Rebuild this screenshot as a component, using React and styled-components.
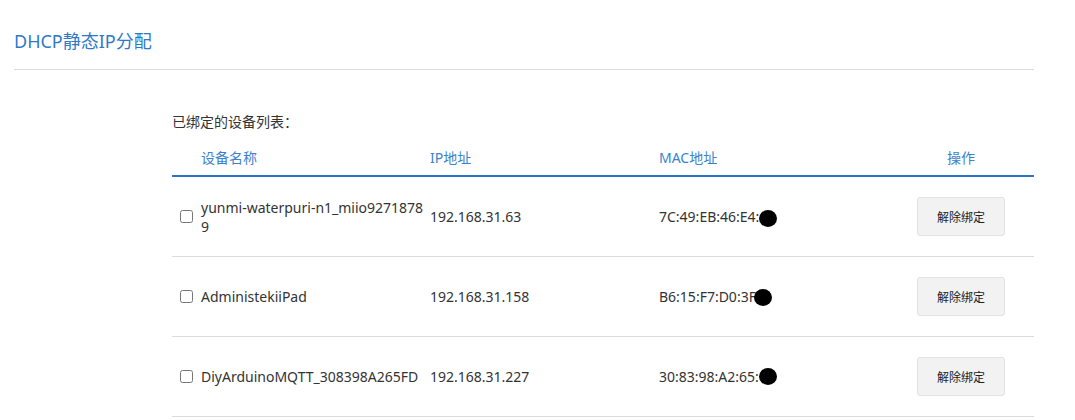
import React from "react";
import styled, { createGlobalStyle } from "styled-components";

const GlobalStyle = createGlobalStyle`
  html, body { margin: 0; padding: 0; background: #fff; }
  body {
    font-family: "Noto Sans", "Noto Sans CJK SC", sans-serif;
    font-size: 14px;
    color: #333;
  }
`;

const Page = styled.div`
  width: 1020px;
  margin-left: 14px;
`;

const TitleBar = styled.div`
  padding: 29px 0 15px;
  border-bottom: 1px solid #ddd;
`;

const Title = styled.h1`
  margin: 0;
  font-size: 18px;
  font-weight: normal;
  line-height: 25px;
  color: #3079c8;
`;

const Section = styled.section`
  margin-left: 158px;
  padding-top: 42px;
`;

const ListLabel = styled.div`
  line-height: 20px;
  color: #333;
`;

const Table = styled.table`
  width: 862px;
  border-collapse: collapse;
  table-layout: fixed;
  margin-top: 16px;
`;

const Th = styled.th`
  font-weight: normal;
  text-align: ${(p) => p.$align || "left"};
  color: #3b82cc;
  line-height: 20px;
  padding: 0 0 7px ${(p) => p.$pl || 0}px;
  border-bottom: 2px solid #2a74c2;
`;

const Row = styled.tr`
  border-bottom: 1px solid #ddd;
`;

const Td = styled.td`
  height: 79px;
  padding: 0 0 0 ${(p) => p.$pl || 0}px;
  vertical-align: middle;
  text-align: ${(p) => p.$align || "left"};
  line-height: 19px;
  color: #333;
`;

const NameCell = styled.div`
  display: flex;
  align-items: center;
  gap: 8px;
  padding-left: 8px;
`;

const Check = styled.input`
  width: 13px;
  height: 13px;
  margin: 0;
  flex: none;
`;

const Name = styled.span`
  word-break: break-all;
  flex: 1;
  min-width: 0;
`;

const Redaction = styled.span`
  display: inline-block;
  width: 18px;
  height: 17px;
  margin-left: ${(p) => p.$ml || 0}px;
  border-radius: 50%;
  background: #000;
  vertical-align: middle;
  transform: translateY(${(p) => p.$dy || 0}px);
`;

const UnbindButton = styled.button`
  width: 88px;
  height: 39px;
  font-family: "Noto Sans CJK SC", sans-serif;
  font-size: 12px;
  color: #222;
  background: #f2f2f2;
  border: 1px solid #e2e2e2;
  border-radius: 3px;
  padding: 0;
`;

const devices = [
  { name: "yunmi-waterpuri-n1_miio92718789", ip: "192.168.31.63", mac: "7C:49:EB:46:E4:", dy: 1, ml: 0 },
  { name: "AdministekiiPad", ip: "192.168.31.158", mac: "B6:15:F7:D0:3F", dy: 0, ml: -2 },
  { name: "DiyArduinoMQTT_308398A265FD", ip: "192.168.31.227", mac: "30:83:98:A2:65:", dy: -1, ml: 0 },
];

export default function App() {
  return (
    <Page>
      <GlobalStyle />
      <TitleBar>
        <Title>DHCP静态IP分配</Title>
      </TitleBar>
      <Section>
        <ListLabel>已绑定的设备列表：</ListLabel>
        <Table>
          <colgroup>
            <col style={{ width: 258 }} />
            <col style={{ width: 229 }} />
            <col style={{ width: 229 }} />
            <col style={{ width: 146 }} />
          </colgroup>
          <thead>
            <tr>
              <Th $pl={29}>设备名称</Th>
              <Th $pl={0}>IP地址</Th>
              <Th $pl={0}>MAC地址</Th>
              <Th $align="center">操作</Th>
            </tr>
          </thead>
          <tbody>
            {devices.map((d) => (
              <Row key={d.name}>
                <Td>
                  <NameCell>
                    <Check type="checkbox" />
                    <Name>{d.name}</Name>
                  </NameCell>
                </Td>
                <Td>{d.ip}</Td>
                <Td>
                  {d.mac}
                  <Redaction $dy={d.dy} $ml={d.ml} />
                </Td>
                <Td $align="center">
                  <UnbindButton>解除绑定</UnbindButton>
                </Td>
              </Row>
            ))}
          </tbody>
        </Table>
      </Section>
    </Page>
  );
}
